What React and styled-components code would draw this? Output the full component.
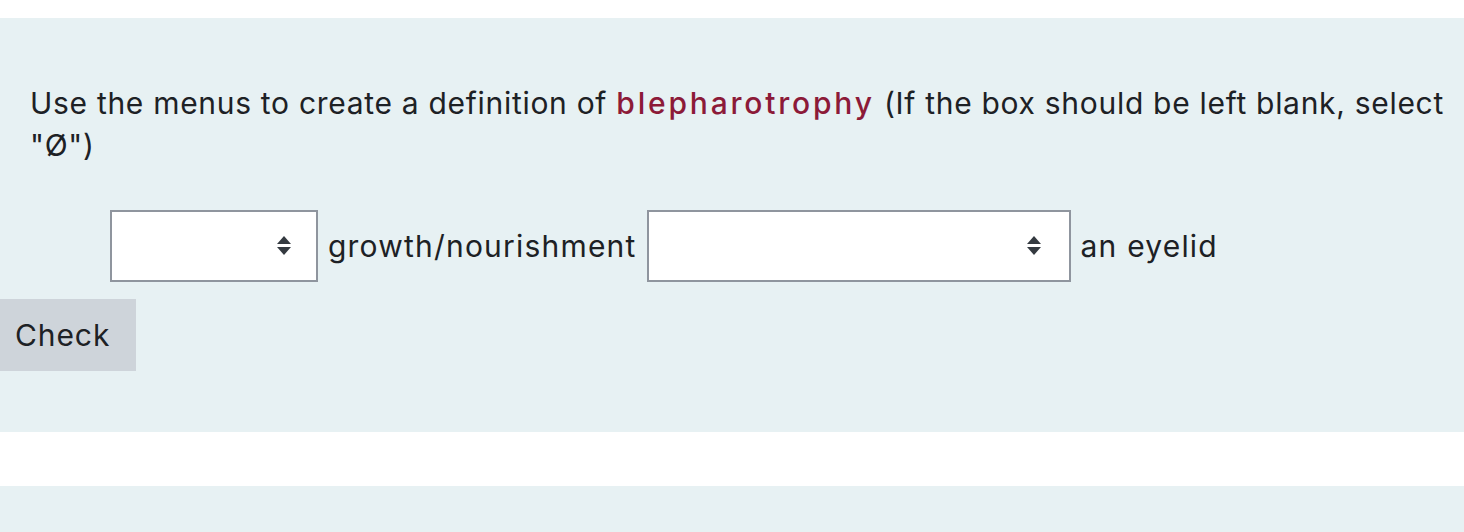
import styled, { createGlobalStyle } from "styled-components";

const GlobalStyle = createGlobalStyle`
  html, body {
    margin: 0;
    padding: 0;
    background: #ffffff;
  }
  body {
    font-family: "Inter", "Open Sans", sans-serif;
    color: #1d2125;
  }
`;

const Page = styled.div`
  padding-top: 18px;
  display: flex;
  flex-direction: column;
  gap: 54px;
`;

const Panel = styled.div`
  background: #e7f1f3;
  height: ${(p) => p.$height}px;
  box-sizing: border-box;
  padding: ${(p) => (p.$padded ? "64px 0 0 0" : "0")};
`;

const Prompt = styled.p`
  margin: 0 0 0 30px;
  font-size: 30px;
  line-height: 42px;
  letter-spacing: 0.7px;
  max-width: 1420px;
`;

const Term = styled.span`
  color: #8c1a38;
  font-weight: 500;
  letter-spacing: 2.8px;
`;

const Row = styled.div`
  display: flex;
  align-items: center;
  gap: 10px;
  margin: 44px 0 0 110px;
  font-size: 30px;
  letter-spacing: 1.2px;
`;

const SelectBox = styled.div`
  width: ${(p) => p.$width}px;
  height: 72px;
  box-sizing: border-box;
  background: #ffffff;
  border: 2px solid #8f959e;
  display: flex;
  align-items: center;
  justify-content: flex-end;
  padding-right: ${(p) => p.$arrowGap}px;
`;

const Word = styled.span`
  white-space: nowrap;
`;

const CheckButton = styled.button`
  display: block;
  margin-top: 17px;
  width: 136px;
  height: 72px;
  border: none;
  background: #ced4da;
  color: #1d2125;
  font-family: "Inter", "Open Sans", sans-serif;
  font-size: 30px;
  letter-spacing: 0.9px;
  text-align: left;
  padding: 0 0 0 15px;
`;

function UpDown() {
  return (
    <svg width="16" height="20" viewBox="0 0 16 20">
      <polygon points="8,0 15,8 1,8" fill="#343a40" />
      <polygon points="1,11 15,11 8,19" fill="#343a40" />
    </svg>
  );
}

function Select({ width, arrowGap }) {
  return (
    <SelectBox $width={width} $arrowGap={arrowGap}>
      <UpDown />
    </SelectBox>
  );
}

export default function App() {
  return (
    <>
      <GlobalStyle />
      <Page>
        <Panel $height={414} $padded>
          <Prompt>
            Use the menus to create a definition of{" "}
            <Term>blepharotrophy</Term> (If the box should be left blank,
            select "Ø")
          </Prompt>
          <Row>
            <Select width={208} arrowGap={24} />
            <Word>growth/nourishment</Word>
            <Select width={424} arrowGap={27} />
            <Word>an eyelid</Word>
          </Row>
          <CheckButton>Check</CheckButton>
        </Panel>
        <Panel $height={46} />
      </Page>
    </>
  );
}
